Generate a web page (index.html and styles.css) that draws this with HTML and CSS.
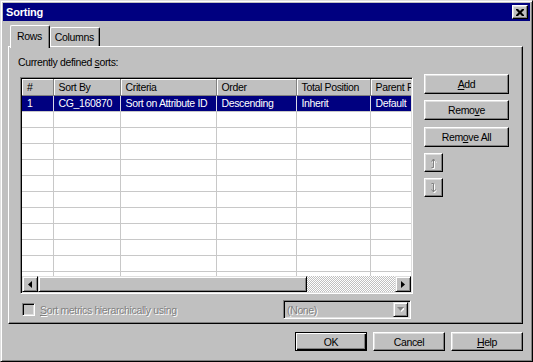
FILE: index.html
```html
<!DOCTYPE html>
<html>
<head>
<meta charset="utf-8">
<title>Sorting</title>
<link rel="stylesheet" href="styles.css">
</head>
<body>
<div class="window">
  <div class="titlebar">
    <span class="title">Sorting</span>
    <div class="close-btn">
      <svg width="8" height="7" viewBox="0 0 8 7"><path d="M0 0h2l2 2 2-2h2v1l-2.5 2.5L8 6v1H6L4 5 2 7H0V6l2.5-2.5L0 1z" fill="#000"/></svg>
    </div>
  </div>
  <div class="content">
    <div class="tabs">
      <div class="tab active">Rows</div>
      <div class="tab">Columns</div>
    </div>
    <div class="panel">
      <div class="caption">Currently defined <u>s</u>orts:</div>
      <div class="main">
        <div class="grid">
          <div class="grid-body">
            <table class="sheet">
              <colgroup>
                <col class="c1"><col class="c2"><col class="c3"><col class="c4"><col class="c5"><col class="c6">
              </colgroup>
              <thead>
                <tr><th>#</th><th>Sort By</th><th>Criteria</th><th>Order</th><th>Total Position</th><th>Parent Position</th></tr>
              </thead>
              <tbody>
                <tr class="sel"><td>1</td><td>CG_160870</td><td>Sort on Attribute ID</td><td>Descending</td><td>Inherit</td><td>Default</td></tr>
                <tr><td></td><td></td><td></td><td></td><td></td><td></td></tr>
                <tr><td></td><td></td><td></td><td></td><td></td><td></td></tr>
                <tr><td></td><td></td><td></td><td></td><td></td><td></td></tr>
                <tr><td></td><td></td><td></td><td></td><td></td><td></td></tr>
                <tr><td></td><td></td><td></td><td></td><td></td><td></td></tr>
                <tr><td></td><td></td><td></td><td></td><td></td><td></td></tr>
                <tr><td></td><td></td><td></td><td></td><td></td><td></td></tr>
                <tr><td></td><td></td><td></td><td></td><td></td><td></td></tr>
                <tr><td></td><td></td><td></td><td></td><td></td><td></td></tr>
                <tr><td></td><td></td><td></td><td></td><td></td><td></td></tr>
                <tr><td></td><td></td><td></td><td></td><td></td><td></td></tr>
                <tr><td></td><td></td><td></td><td></td><td></td><td></td></tr>
              </tbody>
            </table>
          </div>
          <div class="hscroll">
            <div class="sb-btn"><svg width="4" height="7" viewBox="0 0 4 7"><path d="M4 0v7L0 3.5z" fill="#000"/></svg></div>
            <div class="sb-thumb"></div>
            <div class="sb-track"></div>
            <div class="sb-btn"><svg width="4" height="7" viewBox="0 0 4 7"><path d="M0 0v7l4-3.5z" fill="#000"/></svg></div>
          </div>
        </div>
        <div class="side">
          <div class="btn wide"><span><u>A</u>dd</span></div>
          <div class="btn wide"><span>Remo<u>v</u>e</span></div>
          <div class="btn wide gap-more"><span>Rem<u>o</u>ve All</span></div>
          <div class="btn small">
            <svg width="11" height="12" viewBox="0 0 11 12">
              <g fill="none" stroke="#fff" stroke-width="1" transform="translate(1,1)"><path d="M5.5 2v8.5M3.5 10.5h2M3.5 4.5l2-2.5 2 2.5"/></g>
              <g fill="none" stroke="#808080" stroke-width="1"><path d="M5.5 2v8.5M3.5 10.5h2M3.5 4.5l2-2.5 2 2.5"/></g>
            </svg>
          </div>
          <div class="btn small">
            <svg width="11" height="12" viewBox="0 0 11 12">
              <g fill="none" stroke="#fff" stroke-width="1" transform="translate(1,1)"><path d="M5.5 1.5v8.5M3.5 1.5h2M3.5 7.5l2 2.5 2-2.5"/></g>
              <g fill="none" stroke="#808080" stroke-width="1"><path d="M5.5 1.5v8.5M3.5 1.5h2M3.5 7.5l2 2.5 2-2.5"/></g>
            </svg>
          </div>
        </div>
      </div>
      <div class="options">
        <div class="check-label">
          <span class="checkbox"></span>
          <span class="disabled-text"><u>S</u>ort metrics hierarchically using</span>
        </div>
        <div class="combo">
          <span class="combo-text disabled-text">(None)</span>
          <span class="combo-btn">
            <svg width="7" height="5" viewBox="0 0 7 5"><path d="M1 1h7l-3.5 4z" fill="#fff"/><path d="M0 0h7l-3.5 4z" fill="#808080"/></svg>
          </span>
        </div>
      </div>
    </div>
    <div class="footer">
      <div class="btn footer-btn default"><span>OK</span></div>
      <div class="btn footer-btn"><span>Cancel</span></div>
      <div class="btn footer-btn"><span><u>H</u>elp</span></div>
    </div>
  </div>
</div>
</body>
</html>
```

FILE: styles.css
```css
* { box-sizing: border-box; }
html, body {
  margin: 0;
  padding: 0;
  background: #c0c0c0;
}
body {
  font-family: "Liberation Sans", Arial, sans-serif;
  font-size: 10.5px;
  letter-spacing: -0.35px;
  color: #000;
}
u { text-decoration: underline; text-underline-offset: 1px; }

.window {
  width: 533px;
  height: 362px;
  background: #c0c0c0;
  border: 1px solid;
  border-color: #dfdfdf #000 #000 #dfdfdf;
  box-shadow: inset 1px 1px #fff, inset -1px -1px #808080;
  padding: 2px;
  display: flex;
  flex-direction: column;
}

.titlebar {
  height: 18px;
  background: #000080;
  display: flex;
  align-items: center;
  justify-content: space-between;
  padding: 0 2px 0 3px;
}
.title {
  color: #fff;
  font-weight: bold;
  font-size: 11px;
  letter-spacing: -0.2px;
}
.close-btn {
  width: 16px;
  height: 14px;
  background: #c0c0c0;
  border: 1px solid;
  border-color: #fff #000 #000 #fff;
  box-shadow: inset -1px -1px #808080, inset 1px 1px #dfdfdf;
  display: flex;
  align-items: center;
  justify-content: center;
}

.content {
  flex: 1;
  display: flex;
  flex-direction: column;
  padding: 6px 7px 0 5px;
}

.tabs {
  display: flex;
  align-items: flex-end;
  height: 21px;
  padding-left: 2px;
  position: relative;
  z-index: 2;
  margin-bottom: -2px;
}
.tab {
  height: 19px;
  padding: 3px 5px 0 4px;
  border: 1px solid #fff;
  border-bottom: none;
  border-right: 1px solid #000;
  box-shadow: inset -1px 0 #808080;
  border-radius: 2px 2px 0 0;
  background: #c0c0c0;
  margin-bottom: 2px;
}
.tab.active {
  height: 23px;
  margin-bottom: 0;
  padding: 4px 7px 0 6px;
}

.panel {
  height: 278px;
  border: 1px solid;
  border-color: #fff #000 #000 #fff;
  box-shadow: inset -1px -1px #808080;
  padding: 0 12px 0 11px;
  display: flex;
  flex-direction: column;
}
.caption {
  margin: 9px 0 0 -2px;
  line-height: 13px;
}

.main {
  display: flex;
  align-items: flex-start;
  margin-top: 8px;
  gap: 11px;
}

.grid {
  width: 393px;
  height: 217px;
  border: 1px solid;
  border-color: #808080 #fff #fff #808080;
  box-shadow: inset 1px 1px #000, inset -1px -1px #dfdfdf;
  padding: 1px;
  display: flex;
  flex-direction: column;
  background: #fff;
}
.grid-body {
  flex: 1;
  overflow: hidden;
  background: #fff;
}
.sheet {
  border-collapse: collapse;
  table-layout: fixed;
  width: 431px;
}
.c1 { width: 31px; }
.c2 { width: 67px; }
.c3 { width: 96px; }
.c4 { width: 80px; }
.c5 { width: 74px; }
.c6 { width: 83px; }
.sheet th {
  height: 16px;
  background: #c0c0c0;
  font-weight: normal;
  text-align: left;
  padding: 0 0 0 5px;
  white-space: nowrap;
  overflow: hidden;
  border-right: 1px solid #808080;
  border-bottom: 1px solid #808080;
  box-shadow: inset 1px 1px #fff;
}
.sheet td {
  height: 16px;
  padding: 0 0 0 5px;
  white-space: nowrap;
  overflow: hidden;
  border-right: 1px solid #c8c8c8;
  border-bottom: 1px solid #c8c8c8;
}
.sheet tr.sel td {
  background: #000080;
  color: #fff;
  border-right-color: #d8d8e8;
}

.hscroll {
  height: 16px;
  display: flex;
}
.sb-btn {
  width: 16px;
  height: 16px;
  background: #c0c0c0;
  border: 1px solid;
  border-color: #dfdfdf #000 #000 #dfdfdf;
  box-shadow: inset 1px 1px #fff, inset -1px -1px #808080;
  display: flex;
  align-items: center;
  justify-content: center;
}
.sb-thumb {
  width: 269px;
  height: 16px;
  background: #c0c0c0;
  border: 1px solid;
  border-color: #dfdfdf #000 #000 #dfdfdf;
  box-shadow: inset 1px 1px #fff, inset -1px -1px #808080;
}
.sb-track {
  flex: 1;
  background: repeating-conic-gradient(#fff 0 25%, #c0c0c0 0 50%) 0 0 / 2px 2px;
}

.side {
  display: flex;
  flex-direction: column;
  gap: 6px;
  margin-top: -3px;
}
.btn {
  background: #c0c0c0;
  border: 1px solid;
  border-color: #fff #000 #000 #fff;
  box-shadow: inset -1px -1px #808080, inset 1px 1px #dfdfdf;
  display: flex;
  align-items: center;
  justify-content: center;
}
.btn.wide {
  width: 85px;
  height: 20px;
}
.btn.gap-more { margin-top: 1px; }
.btn.small {
  width: 19px;
  height: 19px;
  margin-top: 0;
}

.options {
  width: 393px;
  display: flex;
  justify-content: space-between;
  align-items: center;
  margin-top: 6px;
}
.check-label {
  display: flex;
  align-items: center;
  gap: 5px;
  margin-left: 2px;
}
.checkbox {
  width: 13px;
  height: 13px;
  border: 1px solid;
  border-color: #808080 #fff #fff #808080;
  box-shadow: inset 1px 1px #000, inset -1px -1px #dfdfdf;
  background: #c0c0c0;
}
.disabled-text {
  color: #808080;
  text-shadow: 1px 1px #fff;
}
.combo {
  width: 128px;
  height: 19px;
  border: 1px solid;
  border-color: #808080 #fff #fff #808080;
  box-shadow: inset 1px 1px #000, inset -1px -1px #dfdfdf;
  padding: 2px;
  display: flex;
  align-items: center;
  justify-content: space-between;
  margin-right: 2px;
}
.combo-text { padding-left: 1px; }
.combo-btn {
  width: 15px;
  height: 15px;
  background: #c0c0c0;
  border: 1px solid;
  border-color: #dfdfdf #000 #000 #dfdfdf;
  box-shadow: inset 1px 1px #fff, inset -1px -1px #808080;
  display: flex;
  align-items: center;
  justify-content: center;
}

.footer {
  display: flex;
  justify-content: flex-end;
  gap: 6px;
  margin-top: 8px;
}
.footer-btn {
  width: 72px;
  height: 19px;
}
.footer-btn.default {
  border: 1px solid #000;
  box-shadow: inset 1px 1px #fff, inset -1px -1px #000, inset -2px -2px #808080;
}
```
